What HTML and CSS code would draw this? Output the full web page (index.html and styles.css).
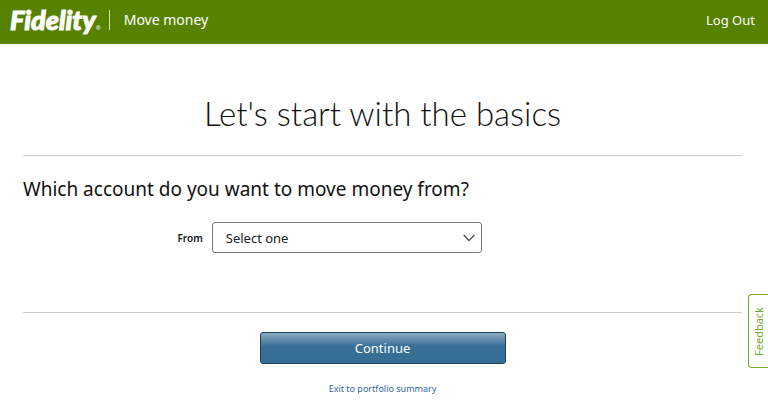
FILE: index.html
```html
<!DOCTYPE html>
<html lang="en">
<head>
<meta charset="utf-8">
<meta name="viewport" content="width=device-width, initial-scale=1">
<title>Move money</title>
<link rel="stylesheet" href="styles.css">
</head>
<body>
<header class="topbar">
  <a class="logo" href="#">Fidelity<span class="mark">®</span></a>
  <span class="section">Move money</span>
  <a class="logout" href="#">Log Out</a>
</header>
<main class="page">
  <h1 class="title">Let's start with the basics</h1>
  <form class="form">
    <section class="step">
      <h2 class="question">Which account do you want to move money from?</h2>
      <div class="field">
        <label class="label" for="from">From</label>
        <div class="select-wrap">
          <select class="select" id="from"><option>Select one</option></select>
          <svg class="chevron" viewBox="0 0 12 8" aria-hidden="true"><path d="M0.7 1 6 6.6 11.3 1"/></svg>
        </div>
      </div>
    </section>
    <div class="actions">
      <button class="continue" type="button">Continue</button>
      <a class="exit" href="#">Exit to portfolio summary</a>
    </div>
  </form>
</main>
<button class="feedback" type="button">Feedback</button>
</body>
</html>
```
FILE: styles.css
```css
* { box-sizing: border-box; }
body {
  margin: 0;
  background: #fff;
  color: #111;
  font-family: "Noto Sans", "Open Sans", sans-serif;
}
a { text-decoration: none; }
.topbar {
  display: flex;
  align-items: center;
  height: 44px;
  padding: 0 13px 4px 10px;
  background: #568200;
  color: #fff;
}
.logo {
  padding-right: 8px;
  color: #fff;
  font: italic 900 27px/32px Lato, sans-serif;
  -webkit-text-stroke: 1px #fff;
}
.mark {
  font: 400 6px/6px "Noto Sans", sans-serif;
  -webkit-text-stroke: 0;
}
.section {
  padding-left: 14px;
  border-left: 1px solid #d5e0bf;
  font-size: 14px;
  line-height: 20px;
}
.logout {
  margin-left: auto;
  color: #fff;
  font-size: 13px;
  line-height: 20px;
}
.page { padding: 47px 26px 0 23px; }
.title {
  margin: 0;
  padding-bottom: 20px;
  border-bottom: 1px solid #ccc;
  font: 300 33px/44px Lato, sans-serif;
  text-align: center;
}
.step {
  padding: 20px 0 59px;
  border-bottom: 1px solid #ccc;
}
.question {
  margin: 0 0 19px;
  font-size: 19px;
  font-weight: 400;
  line-height: 27px;
}
.field {
  display: grid;
  grid-template-columns: 25% 270px;
  column-gap: 9px;
  align-items: center;
}
.label {
  font-size: 10px;
  font-weight: 600;
  text-align: right;
}
.select-wrap { position: relative; }
.select {
  display: block;
  width: 100%;
  height: 31px;
  padding: 0 32px 0 13px;
  border: 1px solid #777;
  border-radius: 3px;
  background: #fff;
  color: #222;
  font: 13px "Noto Sans", sans-serif;
  appearance: none;
}
.chevron {
  position: absolute;
  top: 12px;
  right: 7px;
  width: 12px;
  height: 8px;
  fill: none;
  stroke: #444;
  stroke-width: 1.2;
  pointer-events: none;
}
.actions {
  display: flex;
  flex-direction: column;
  align-items: center;
  gap: 17px;
  padding-top: 19px;
}
.continue {
  width: 246px;
  height: 32px;
  border: 1px solid #1b4159;
  border-radius: 3px;
  background: linear-gradient(#8cabc2, #366e96 45%, #366e96);
  color: #fff;
  font: 13px "Noto Sans", sans-serif;
}
.exit {
  color: #2f68a0;
  font-size: 9px;
  line-height: 16px;
}
.feedback {
  position: fixed;
  right: 0;
  bottom: 37px;
  width: 20px;
  height: 74px;
  padding: 0;
  border: 1px solid #76a630;
  border-right: 0;
  border-radius: 4px 0 0 4px;
  background: #fff;
  color: #76a630;
  font: 11px/18px "Noto Sans", sans-serif;
  writing-mode: sideways-lr;
}
```
